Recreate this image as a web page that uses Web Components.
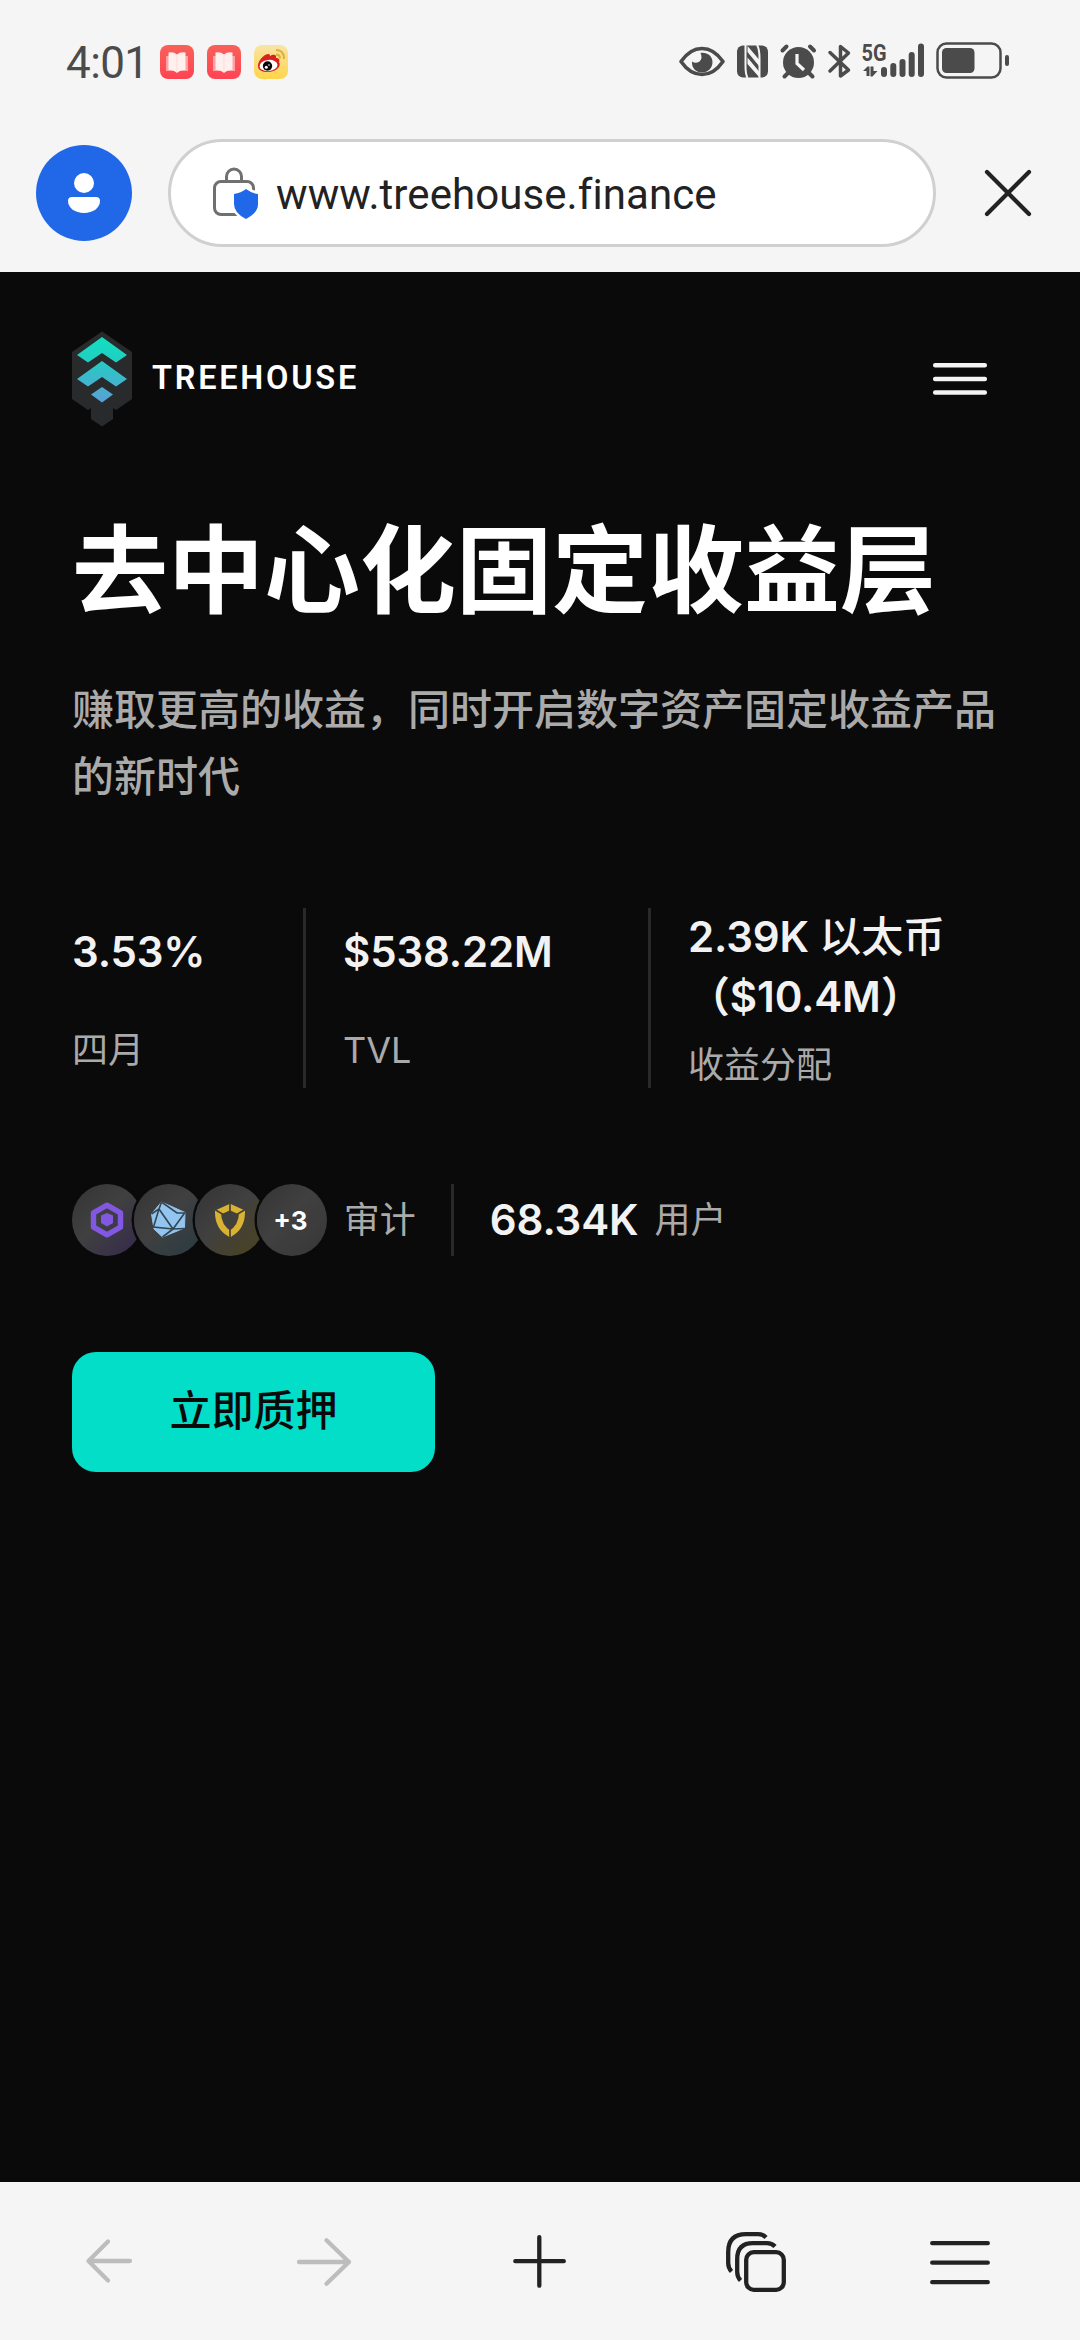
<!DOCTYPE html>
<html lang="zh-CN">
<head>
<meta charset="utf-8">
<title>Treehouse</title>
<style>
html,body{margin:0;padding:0}
body{width:1080px;height:2340px;overflow:hidden;background:#0a0a0a;font-family:Inter,"Noto Sans CJK SC",sans-serif}
</style>
</head>
<body>
<app-screen></app-screen>
<script>
const define=(name,html)=>customElements.define(name,class extends HTMLElement{
  constructor(){super();this.attachShadow({mode:'open'}).innerHTML='<style>*{box-sizing:border-box}svg{display:block;flex:none}</style>'+html;}
});

define('book-badge',`<style>:host{display:block;width:34px;height:34px}</style>
<svg width="34" height="34" viewBox="0 0 34 34"><defs><linearGradient id="g" x2="0" y2="1"><stop stop-color="#f96058"/><stop offset="1" stop-color="#ff4453"/></linearGradient></defs>
<rect width="34" height="34" rx="8" fill="url(#g)"/><path d="M6 11h22v15h-8l-3 2-3-2H6z" fill="#ffa0a4"/><path d="M8.500 7.500q5-1 8.500 2 3.500-3 8.500-2V25q-5-.5-8.500 2.500Q13.500 24.500 8.500 25z" fill="#fff0ee"/><path d="M17 9.500v18" stroke="#ffd9da" stroke-width="1"/></svg>`);

define('weibo-badge',`<style>:host{display:block;width:34px;height:34px}</style>
<svg width="34" height="34" viewBox="0 0 34 34"><defs><linearGradient id="g" x2="0" y2="1"><stop stop-color="#f9e4a4"/><stop offset="1" stop-color="#ffd54c"/></linearGradient></defs>
<rect width="34" height="34" rx="8" fill="url(#g)"/>
<path d="M4 21C4 16 9 10 14 9c2 0 2 1 2 2 3-2 7-2 6 2 3 0 4 2 3 4 3 4-3 10-11 10C8 27 4 25 4 21z" fill="#d9231f"/>
<ellipse cx="14.500" cy="20.500" rx="9" ry="5.600" fill="#fff" transform="rotate(-6 14.500 20.500)"/><circle cx="13.500" cy="21" r="4.700" fill="#080808"/><circle cx="12.300" cy="22.300" r="1.500" fill="#fff"/><circle cx="15" cy="20" r=".8" fill="#fff"/>
<path d="M22 9.500q4 0 4 4M22 5q8 0 8 9" fill="none" stroke="#dcb03c" stroke-width="2"/></svg>`);

define('status-bar',`<style>
:host{display:flex;height:120px;align-items:flex-start;padding:0 0 0 66px;color:#4b4b4b}
.time{font:400 44px/52px Roboto,sans-serif;letter-spacing:-.6px;width:94px;padding-top:37px}
.apps{display:flex;gap:13px;padding-top:44.500px}
.sys{margin-left:auto}
text{font:700 24px Roboto,sans-serif}
</style>
<div class="time">4:01</div><div class="apps"><book-badge></book-badge><book-badge></book-badge><weibo-badge></weibo-badge></div>
<svg class="sys" width="410" height="120" viewBox="670 0 410 120" fill="#4b4b4b">
<path d="M681 61.500Q690 48.500 702 48.500T723 61.500Q714 74.500 702 74.500T681 61.500z" fill="none" stroke="#4b4b4b" stroke-width="3.600" stroke-linejoin="round"/>
<path d="M700.500 53Q703 58 699.500 61.500Q695.500 64 692 61.500C691.500 68 696 72.500 702 72.500S712.500 68 712.500 62C712.500 56 707 52 700.500 53z"/>
<rect x="737" y="45.500" width="31" height="32" rx="6"/>
<path d="M745.500 45v21q0 8 2 12M759.500 78V58q0-9-2.500-13" fill="none" stroke="#f5f5f5" stroke-width="2"/><path d="M747.500 46L759 59.500V66L747.500 52zM747.500 57.500L759.500 72v5.500L747.500 64z" fill="#f5f5f5"/>
<circle cx="798.500" cy="62.500" r="15.500"/><path d="M782.500 50.500l4-4M814 50.500l-4-4M788 73l-3.500 3.500M809 73l3.500 3.500" stroke="#4b4b4b" stroke-width="4" stroke-linecap="round"/><path d="M797 54v9.500l7 6.500" fill="none" stroke="#f5f5f5" stroke-width="3.200"/>
<path d="M830 52.500L848.500 70 840.500 76V46.500L848.500 53 830 71" fill="none" stroke="#4b4b4b" stroke-width="3.500" stroke-linecap="round" stroke-linejoin="round"/>
<text x="861.500" y="60.500" textLength="25" lengthAdjust="spacingAndGlyphs">5G</text>
<path d="M863 71l4.500-4.500h2V76h-3v-5zM870.500 66.500h3V71h4l-5 5.500h-2z"/>
<g stroke="#4b4b4b" stroke-width="6" stroke-linecap="round"><path d="M884 70v4M893.300 66v8M902.500 62v12M911.700 55v19M921 46.500v27.500"/></g>
<rect x="937.500" y="43.500" width="63" height="34" rx="9" fill="none" stroke="#4b4b4b" stroke-width="2.500"/><rect x="942" y="48" width="32.500" height="25" rx="4.500"/><rect x="1005" y="55" width="4" height="11" rx="2"/>
</svg>`);

define('address-bar',`<style>
:host{display:flex;height:152px;align-items:flex-start;padding:19px 0 0 36px}
.av{margin-top:5.500px}
.box{display:flex;align-items:center;width:768px;height:108px;margin-left:36px;border:3px solid #d0d0d0;border-radius:54px;background:#fff;padding-left:39px}
.url{font:400 42px/50px Roboto,"Noto Sans CJK SC",sans-serif;color:#222;margin-left:14px;padding-top:3px;letter-spacing:.08px}
</style>
<svg class="av" width="96" height="96" viewBox="36 145 96 96"><circle cx="84" cy="193" r="48" fill="#2168e8"/><circle cx="84" cy="183" r="10" fill="#fff"/><path d="M72 197h24q4 0 4 4c0 7-7 12-16 12s-16-5-16-12q0-4 4-4z" fill="#fff"/></svg>
<div class="box"><svg width="52" height="56" viewBox="210 166 52 56"><path d="M226.500 181v-3.500a7.500 7.500 0 0 1 15 0V181" fill="none" stroke="#707070" stroke-width="3"/><rect x="214.500" y="182.500" width="39" height="33" rx="6.500" fill="none" stroke="#707070" stroke-width="3"/><path d="M246 190q5 4 12 5v10q0 9-12 15-12-6-12-15v-10q7-1 12-5z" fill="#2168e8" stroke="#fff" stroke-width="5" paint-order="stroke"/></svg><span class="url"><slot></slot></span></div>
<svg style="margin-left:36px" width="90" height="108" viewBox="972 139 90 108"><path d="M987 172l42 42M1029 172l-42 42" stroke="#222" stroke-width="4.200" stroke-linecap="round"/></svg>`);

define('site-header',`<style>
:host{display:flex;align-items:center;height:96px;justify-content:space-between}
.brand{display:flex;align-items:center;gap:20px}
.name{font:600 32.500px/40px Roboto,sans-serif;letter-spacing:2.750px;color:#fff;padding-bottom:2px}
</style>
<div class="brand"><svg width="60" height="96" viewBox="0 0 60 96"><defs><linearGradient id="a" gradientUnits="userSpaceOnUse" x1="0" y1="6" x2="0" y2="72"><stop stop-color="#11e0c2"/><stop offset=".3" stop-color="#1fd0c0"/><stop offset="1" stop-color="#5b9fd8"/></linearGradient></defs>
<path d="M30 0.500L60 21v47L44 79l-3-2v11l-11 7.500L19 88V77l-3 2L0 68V21z" fill="#282a2c"/>
<path d="M30 6L55 24 44 31.500 30 22 16 31.500 5 24zM30 30L55 48 44 55.500 30 46 16 55.500 5 48zM30 56l11 7.500L30 71.500 19 63.500z" fill="url(#a)"/></svg><span class="name">TREEHOUSE</span></div>
<svg width="72" height="60" viewBox="924 349 72 60"><path d="M935.200 365.300h49.600M935.200 379h49.600M935.200 392.500h49.600" stroke="#f4f4f4" stroke-width="4.500" stroke-linecap="round"/></svg>`);

define('stat-item',`<style>
:host{display:flex;flex-direction:column;justify-content:center;height:180px;flex:none}
.v{font-size:42px;line-height:60px;font-weight:600;letter-spacing:-.15px;color:#f2f2f2;white-space:nowrap}
.l{font-size:36px;line-height:54px;color:#aaa;margin-top:var(--gap,41px)}
</style><div class="v"><slot name="value"></slot></div><div class="l"><slot></slot></div>`);

define('v-rule',`<style>:host{display:block;flex:none;width:3px;background:#292929}</style>`);

define('audit-chip',`<style>
:host{display:flex;align-items:center;justify-content:center;flex:none;width:70px;height:72px;border-radius:50%;background:linear-gradient(135deg,#343434 0%,#404040 45%,var(--tint,#373737) 100%);box-shadow:0 0 0 2.500px #0a0a0a;color:#fff;font-size:26px;font-weight:700}
</style><slot></slot>`);

define('audit-group',`<style>
:host{display:flex}
audit-chip+audit-chip{margin-left:-8.400px}
.more{padding-right:3px}
</style>
<audit-chip style="--tint:#34284d"><svg width="40" height="40" viewBox="0 0 40 40"><path d="M20 3.500L35 12v16L20 36.500 5 28V12z" fill="none" stroke="#8257e2" stroke-width="6" stroke-linejoin="round" transform="translate(2 2) scale(.9)"/><path d="M20 13l6 2.500v7.500l-6 3.500-6-3.500v-7.500z" fill="#8257e2"/></svg></audit-chip>
<audit-chip style="--tint:#283a42"><svg width="40" height="40" viewBox="0 0 40 40"><path d="M12.500 2L36 12.500 35.500 28 13.500 37 5 29 2.500 14z" fill="#92c5f0" stroke="#92c5f0" stroke-linejoin="round"/><path d="M12.500 2L28 13H36.500M10 9L24 29 36 12.500M10 9L4.500 27 24 29 36 28.500M24 29L13.500 37M12.500 2L10 9 2.500 14" fill="none" stroke="#344652" stroke-width="1.600"/></svg></audit-chip>
<audit-chip style="--tint:#4b431c"><svg width="40" height="40" viewBox="0 0 40 40"><path d="M20 7L32 12.500Q32 27 20 34 8 27 8 12.500z" fill="none" stroke="#d9b233" stroke-width="6"/><path d="M20 2v12M20 28v10M4 9l10 6M36 9l-10 6" stroke="#47422b" stroke-width="1.700"/></svg></audit-chip>
<audit-chip class="more">+3</audit-chip>`);

define('stake-button',`<style>
:host{display:flex;align-items:center;justify-content:center;width:363px;height:120px;border-radius:24px;background:#02dec8;color:#0a0a0a;font-size:42px;font-weight:500;padding-bottom:10px;box-sizing:border-box}
</style><slot></slot>`);

define('hero-page',`<style>
:host{display:block;box-sizing:border-box;height:1910px;padding:59px 84px 0 72px;background:#0a0a0a}
h1{margin:83px 0 0;font-size:96px;line-height:120px;font-weight:700;color:#fff;white-space:nowrap}
p{margin:46px 0 0;font-size:42px;line-height:67px;font-weight:500;color:#aaa;width:930px}
.stats{display:flex;margin-top:98px;align-items:stretch}
.row{display:flex;align-items:center;height:72px;margin-top:96px}
.lab{font-size:36px;line-height:54px;color:#aaa}
.n{font-size:42px;line-height:60px;font-weight:600;color:#f2f2f2;letter-spacing:-.15px}
.cjk{font-weight:500}
v-rule{align-self:stretch}
stake-button{margin-top:96px}
</style>
<site-header></site-header>
<h1>去中心化固定收益层</h1>
<p>赚取更高的收益，同时开启数字资产固定收益产品的新时代</p>
<div class="stats">
<stat-item style="width:231px;padding-top:3px"><span slot="value">3.53%</span>四月</stat-item><v-rule></v-rule>
<stat-item style="width:342px;padding:3px 0 0 37px"><span slot="value">$538.22M</span>TVL</stat-item><v-rule></v-rule>
<stat-item style="padding:2px 0 0 37px;--gap:11px"><span slot="value">2.39K <span class="cjk">以太币</span><br>（$10.4M）</span>收益分配</stat-item>
</div>
<div class="row"><audit-group></audit-group><span class="lab" style="margin-left:17px;width:107px">审计</span><v-rule></v-rule><span class="n" style="margin-left:36px">68.34K</span><span class="lab" style="margin-left:16px">用户</span></div>
<stake-button>立即质押</stake-button>`);

define('nav-bar',`<style>:host{display:flex;height:158px;background:#f5f5f5}svg{fill:none;stroke:#222;stroke-width:4.300;stroke-linecap:round;stroke-linejoin:round}</style>
<svg width="216" height="158" viewBox="0 2182 216 158"><path style="stroke:#bdbdbd" d="M130 2261H88.500M108 2241.500L88.500 2261 108 2280.500"/></svg>
<svg width="216" height="158" viewBox="216 2182 216 158"><path style="stroke:#bdbdbd" d="M299 2262h50M326.500 2240.200L349 2262l-22.500 21.800"/></svg>
<svg width="216" height="158" viewBox="432 2182 216 158"><path d="M515.300 2261.200h48.500M539.300 2237.200v48.500"/></svg>
<svg width="216" height="158" viewBox="648 2182 216 158"><rect x="746.200" y="2252.200" width="37.600" height="37.600" rx="7.500"/><g stroke-linecap="butt"><path d="M740.500 2280.500Q737.200 2277 737.200 2272v-13q0-15.800 15.800-15.800h14q5 0 8 3.300"/><path d="M731.500 2271.500Q728.200 2268 728.200 2263v-11q0-17.800 17.800-17.800h12q5 0 8 3.300"/></g></svg>
<svg width="216" height="158" viewBox="864 2182 216 158"><path d="M932.200 2243.200h55.600M932.200 2262.700h55.600M932.200 2282.200h55.600"/></svg>`);

define('app-screen',`<style>:host{display:flex;flex-direction:column;width:1080px;height:2340px}.top{background:#f5f5f5}</style>
<div class="top"><status-bar></status-bar><address-bar>www.treehouse.finance</address-bar></div>
<hero-page></hero-page><nav-bar></nav-bar>`);
</script>
</body>
</html>
